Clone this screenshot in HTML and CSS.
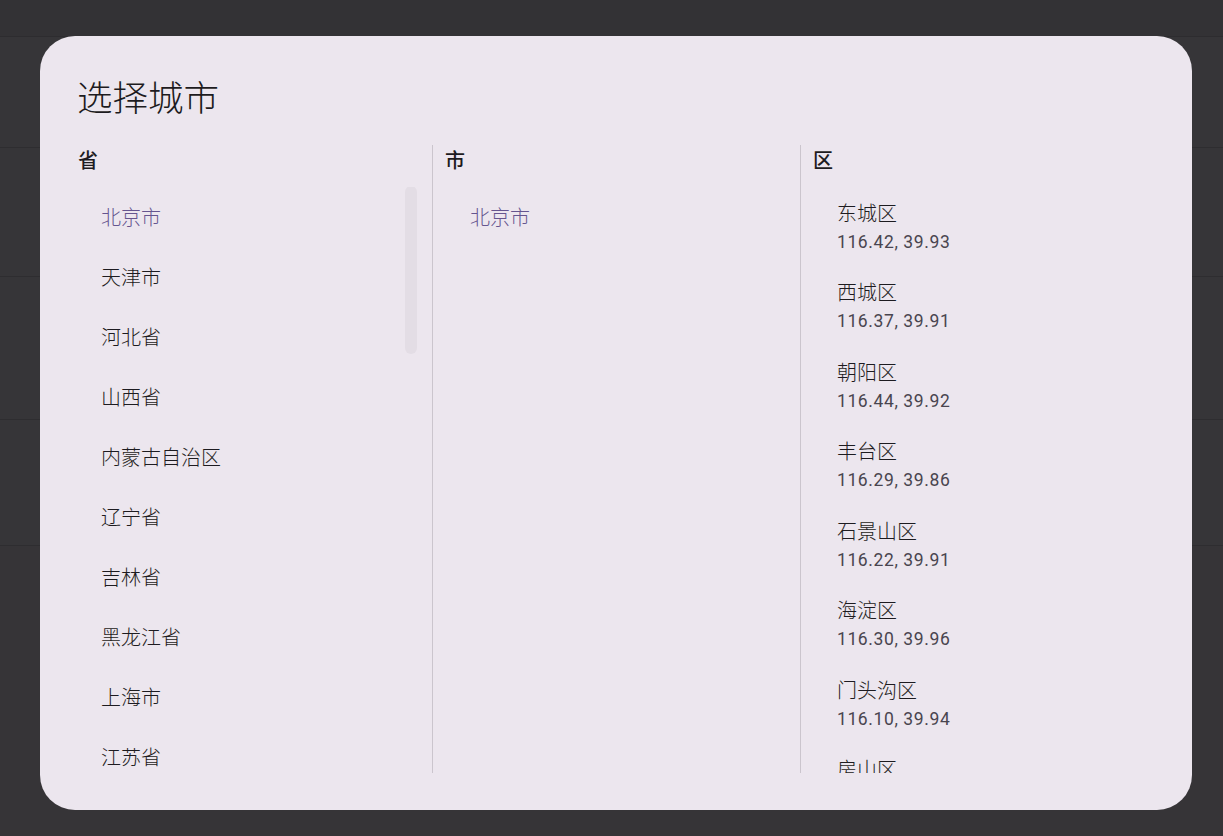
FILE: index.html
```html
<!DOCTYPE html>
<html lang="zh-CN">
<head>
<meta charset="utf-8">
<title>选择城市</title>
<link rel="stylesheet" href="styles.css">
</head>
<body>
<div class="backdrop">
  <div class="bar"></div>
  <div class="row r1"></div>
  <div class="row r2"></div>
  <div class="row r3"></div>
  <div class="row r4"></div>
  <div class="rest"></div>
</div>

<div class="dialog">
  <h1 class="title">选择城市</h1>
  <div class="columns">
    <section class="col col-province">
      <div class="col-head">省</div>
      <div class="list-wrap">
        <ul class="list">
          <li class="item selected">北京市</li>
          <li class="item">天津市</li>
          <li class="item">河北省</li>
          <li class="item">山西省</li>
          <li class="item">内蒙古自治区</li>
          <li class="item">辽宁省</li>
          <li class="item">吉林省</li>
          <li class="item">黑龙江省</li>
          <li class="item">上海市</li>
          <li class="item">江苏省</li>
        </ul>
        <div class="thumb"></div>
      </div>
    </section>
    <div class="divider"></div>
    <section class="col col-city">
      <div class="col-head">市</div>
      <div class="list-wrap">
        <ul class="list">
          <li class="item selected">北京市</li>
        </ul>
      </div>
    </section>
    <div class="divider"></div>
    <section class="col col-district">
      <div class="col-head">区</div>
      <div class="list-wrap">
        <ul class="list">
          <li class="ditem"><span class="dname">东城区</span><span class="dcoord">116.42, 39.93</span></li>
          <li class="ditem"><span class="dname">西城区</span><span class="dcoord">116.37, 39.91</span></li>
          <li class="ditem"><span class="dname">朝阳区</span><span class="dcoord">116.44, 39.92</span></li>
          <li class="ditem"><span class="dname">丰台区</span><span class="dcoord">116.29, 39.86</span></li>
          <li class="ditem"><span class="dname">石景山区</span><span class="dcoord">116.22, 39.91</span></li>
          <li class="ditem"><span class="dname">海淀区</span><span class="dcoord">116.30, 39.96</span></li>
          <li class="ditem"><span class="dname">门头沟区</span><span class="dcoord">116.10, 39.94</span></li>
          <li class="ditem"><span class="dname">房山区</span></li>
        </ul>
      </div>
    </section>
  </div>
</div>
</body>
</html>
```

FILE: styles.css
```css
* { box-sizing: border-box; }

html, body {
  margin: 0;
  padding: 0;
  height: 100%;
}

body {
  background: #353437;
  font-family: Roboto, "Noto Sans CJK SC", sans-serif;
  color: #1d1b20;
  overflow: hidden;
}

.backdrop {
  display: flex;
  flex-direction: column;
  height: 100%;
}

.bar {
  height: 37px;
  background: #333235;
  border-bottom: 1px solid #2d2c2f;
}

.row {
  background: #363538;
  border-bottom: 1px solid #2e2d30;
}
.r1 { height: 111px; }
.r2 { height: 129px; }
.r3 { height: 143px; }
.r4 { height: 126px; }
.rest { flex: 1; background: #363437; }

.dialog {
  position: fixed;
  left: 40px;
  top: 36px;
  width: 1152px;
  height: 774px;
  background: #ece6ee;
  border-radius: 35px;
  padding: 41px 38px 37px 37px;
  display: flex;
  flex-direction: column;
}

.title {
  margin: 0;
  font-size: 35.5px;
  line-height: 44px;
  font-weight: 300;
  color: #1d1b20;
}

.columns {
  margin-top: 24px;
  flex: 1;
  display: flex;
  min-height: 0;
}

.col {
  display: flex;
  flex-direction: column;
  min-height: 0;
}

.col-province { width: 355px; padding-left: 1px; }
.col-city { width: 367px; padding-left: 12px; }
.col-district { flex: 1; padding-left: 12px; }

.divider {
  width: 1px;
  background: #cbc5cd;
}

.col-head {
  height: 42px;
  padding-top: 1px;
  font-size: 20px;
  line-height: 30px;
  font-weight: 500;
  color: #1d1b20;
}

.list-wrap {
  position: relative;
  flex: 1;
  overflow: hidden;
}

.list {
  list-style: none;
  margin: 0;
  padding: 0;
}

.item {
  height: 60px;
  padding-left: 23px;
  padding-bottom: 2px;
  display: flex;
  align-items: center;
  font-size: 20px;
  font-weight: 300;
  color: #1d1b20;
}

.col-city .item { padding-left: 25px; }

.item.selected { color: #65558f; }

.thumb {
  position: absolute;
  left: 327px;
  top: -1px;
  width: 12px;
  height: 168px;
  border-radius: 6px;
  background: #e3dde5;
}

.ditem {
  padding: 11.75px 0 11.75px 24px;
  display: flex;
  flex-direction: column;
}

.dname {
  font-size: 20px;
  line-height: 30px;
  font-weight: 300;
  color: #1d1b20;
}

.dcoord {
  font-size: 17.5px;
  line-height: 26px;
  letter-spacing: 0.6px;
  color: #49454f;
}
```
